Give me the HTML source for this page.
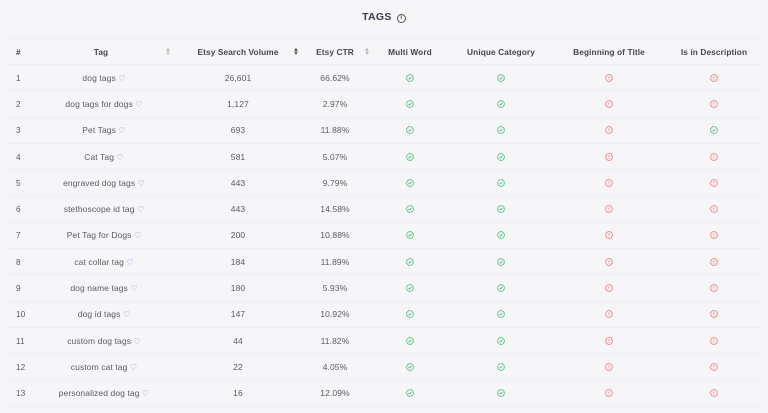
<!DOCTYPE html>
<html><head><meta charset="utf-8"><style>
*{margin:0;padding:0;box-sizing:border-box}
body{width:768px;height:413px;background:#f6f6f9;font-family:"Liberation Sans",sans-serif;position:relative;overflow:hidden;color:#5a5a62}
.title{position:absolute;top:11px;left:0;width:768px;text-align:center;font-size:10.5px;font-weight:bold;color:#3c3c48;letter-spacing:.3px}
.title .i{display:inline-block;width:9px;height:9px;border:1px solid #555;border-radius:50%;font-size:6px;line-height:7px;vertical-align:1px;margin-left:2px;font-weight:bold}
.row{position:absolute;left:5px;width:758px;height:26.3px;border-bottom:1px solid #efeff3}
.row.h{top:38px;height:27px;border-top:1px solid #efeff3}
.c{position:absolute;top:50%;transform:translate(-50%,-50%);white-space:nowrap;font-size:8.5px;letter-spacing:.1px}
.h .c{font-weight:bold;color:#45454f;font-size:8.3px}
.n{position:absolute;top:50%;transform:translateY(-50%);left:11px;font-size:8.3px}
.ht{color:#6f8ad6;font-size:8px}
svg{display:block;width:8px;height:8px}
.s{position:absolute;top:50%;transform:translate(-50%,-50%);font-size:6px;color:#bbb;line-height:4px;text-align:center}
.s.d{color:#555}
</style></head><body>
<svg width="0" height="0" style="position:absolute">
<defs>
<g id="ok"><circle cx="4" cy="4" r="3.4" fill="none" stroke="#5fc489" stroke-width="0.9"/><path d="M2.4 4.1 L3.5 5.1 L5.6 3" fill="none" stroke="#5fc489" stroke-width="0.9"/></g>
<g id="bad"><circle cx="4" cy="4" r="3.4" fill="none" stroke="#f08585" stroke-width="0.9"/><path d="M4 2.2 V4.4 M4 5.2 V5.9" fill="none" stroke="#f08585" stroke-width="0.9"/></g>
</defs></svg>
<div class="title">TAGS <span class="i">i</span></div>
<div class="row h">
<span class="n" style="font-weight:bold;color:#3c3c48">#</span>
<span class="c" style="left:96px">Tag</span><span class="s" style="left:163px">▲<br>▼</span>
<span class="c" style="left:233px">Etsy Search Volume</span><span class="s d" style="left:291px">▲<br>▼</span>
<span class="c" style="left:330px">Etsy CTR</span><span class="s" style="left:362px">▲<br>▼</span>
<span class="c" style="left:405px">Multi Word</span>
<span class="c" style="left:496px">Unique Category</span>
<span class="c" style="left:604px">Beginning of Title</span>
<span class="c" style="left:709px">Is in Description</span>
</div>
<div class="row" style="top:65px"><span class="n">1</span><span class="c" style="left:99px">dog tags <span class="ht">♡</span></span><span class="c" style="left:233px">26,601</span><span class="c" style="left:330px">66.62%</span><span class="c" style="left:405px"><svg><use href="#ok"/></svg></span><span class="c" style="left:496px"><svg><use href="#ok"/></svg></span><span class="c" style="left:604px"><svg><use href="#bad"/></svg></span><span class="c" style="left:709px"><svg><use href="#bad"/></svg></span></div>
<div class="row" style="top:91.3px"><span class="n">2</span><span class="c" style="left:99px">dog tags for dogs <span class="ht">♡</span></span><span class="c" style="left:233px">1,127</span><span class="c" style="left:330px">2.97%</span><span class="c" style="left:405px"><svg><use href="#ok"/></svg></span><span class="c" style="left:496px"><svg><use href="#ok"/></svg></span><span class="c" style="left:604px"><svg><use href="#bad"/></svg></span><span class="c" style="left:709px"><svg><use href="#bad"/></svg></span></div>
<div class="row" style="top:117.6px"><span class="n">3</span><span class="c" style="left:99px">Pet Tags <span class="ht">♡</span></span><span class="c" style="left:233px">693</span><span class="c" style="left:330px">11.88%</span><span class="c" style="left:405px"><svg><use href="#ok"/></svg></span><span class="c" style="left:496px"><svg><use href="#ok"/></svg></span><span class="c" style="left:604px"><svg><use href="#bad"/></svg></span><span class="c" style="left:709px"><svg><use href="#ok"/></svg></span></div>
<div class="row" style="top:143.9px"><span class="n">4</span><span class="c" style="left:99px">Cat Tag <span class="ht">♡</span></span><span class="c" style="left:233px">581</span><span class="c" style="left:330px">5.07%</span><span class="c" style="left:405px"><svg><use href="#ok"/></svg></span><span class="c" style="left:496px"><svg><use href="#ok"/></svg></span><span class="c" style="left:604px"><svg><use href="#bad"/></svg></span><span class="c" style="left:709px"><svg><use href="#bad"/></svg></span></div>
<div class="row" style="top:170.2px"><span class="n">5</span><span class="c" style="left:99px">engraved dog tags <span class="ht">♡</span></span><span class="c" style="left:233px">443</span><span class="c" style="left:330px">9.79%</span><span class="c" style="left:405px"><svg><use href="#ok"/></svg></span><span class="c" style="left:496px"><svg><use href="#ok"/></svg></span><span class="c" style="left:604px"><svg><use href="#bad"/></svg></span><span class="c" style="left:709px"><svg><use href="#bad"/></svg></span></div>
<div class="row" style="top:196.5px"><span class="n">6</span><span class="c" style="left:99px">stethoscope id tag <span class="ht">♡</span></span><span class="c" style="left:233px">443</span><span class="c" style="left:330px">14.58%</span><span class="c" style="left:405px"><svg><use href="#ok"/></svg></span><span class="c" style="left:496px"><svg><use href="#ok"/></svg></span><span class="c" style="left:604px"><svg><use href="#bad"/></svg></span><span class="c" style="left:709px"><svg><use href="#bad"/></svg></span></div>
<div class="row" style="top:222.8px"><span class="n">7</span><span class="c" style="left:99px">Pet Tag for Dogs <span class="ht">♡</span></span><span class="c" style="left:233px">200</span><span class="c" style="left:330px">10.88%</span><span class="c" style="left:405px"><svg><use href="#ok"/></svg></span><span class="c" style="left:496px"><svg><use href="#ok"/></svg></span><span class="c" style="left:604px"><svg><use href="#bad"/></svg></span><span class="c" style="left:709px"><svg><use href="#bad"/></svg></span></div>
<div class="row" style="top:249.1px"><span class="n">8</span><span class="c" style="left:99px">cat collar tag <span class="ht">♡</span></span><span class="c" style="left:233px">184</span><span class="c" style="left:330px">11.89%</span><span class="c" style="left:405px"><svg><use href="#ok"/></svg></span><span class="c" style="left:496px"><svg><use href="#ok"/></svg></span><span class="c" style="left:604px"><svg><use href="#bad"/></svg></span><span class="c" style="left:709px"><svg><use href="#bad"/></svg></span></div>
<div class="row" style="top:275.4px"><span class="n">9</span><span class="c" style="left:99px">dog name tags <span class="ht">♡</span></span><span class="c" style="left:233px">180</span><span class="c" style="left:330px">5.93%</span><span class="c" style="left:405px"><svg><use href="#ok"/></svg></span><span class="c" style="left:496px"><svg><use href="#ok"/></svg></span><span class="c" style="left:604px"><svg><use href="#bad"/></svg></span><span class="c" style="left:709px"><svg><use href="#bad"/></svg></span></div>
<div class="row" style="top:301.7px"><span class="n">10</span><span class="c" style="left:99px">dog id tags <span class="ht">♡</span></span><span class="c" style="left:233px">147</span><span class="c" style="left:330px">10.92%</span><span class="c" style="left:405px"><svg><use href="#ok"/></svg></span><span class="c" style="left:496px"><svg><use href="#ok"/></svg></span><span class="c" style="left:604px"><svg><use href="#bad"/></svg></span><span class="c" style="left:709px"><svg><use href="#bad"/></svg></span></div>
<div class="row" style="top:328px"><span class="n">11</span><span class="c" style="left:99px">custom dog tags <span class="ht">♡</span></span><span class="c" style="left:233px">44</span><span class="c" style="left:330px">11.82%</span><span class="c" style="left:405px"><svg><use href="#ok"/></svg></span><span class="c" style="left:496px"><svg><use href="#ok"/></svg></span><span class="c" style="left:604px"><svg><use href="#bad"/></svg></span><span class="c" style="left:709px"><svg><use href="#bad"/></svg></span></div>
<div class="row" style="top:354.3px"><span class="n">12</span><span class="c" style="left:99px">custom cat tag <span class="ht">♡</span></span><span class="c" style="left:233px">22</span><span class="c" style="left:330px">4.05%</span><span class="c" style="left:405px"><svg><use href="#ok"/></svg></span><span class="c" style="left:496px"><svg><use href="#ok"/></svg></span><span class="c" style="left:604px"><svg><use href="#bad"/></svg></span><span class="c" style="left:709px"><svg><use href="#bad"/></svg></span></div>
<div class="row" style="top:380.6px"><span class="n">13</span><span class="c" style="left:99px">personalized dog tag <span class="ht">♡</span></span><span class="c" style="left:233px">16</span><span class="c" style="left:330px">12.09%</span><span class="c" style="left:405px"><svg><use href="#ok"/></svg></span><span class="c" style="left:496px"><svg><use href="#ok"/></svg></span><span class="c" style="left:604px"><svg><use href="#bad"/></svg></span><span class="c" style="left:709px"><svg><use href="#bad"/></svg></span></div>
</body></html>
